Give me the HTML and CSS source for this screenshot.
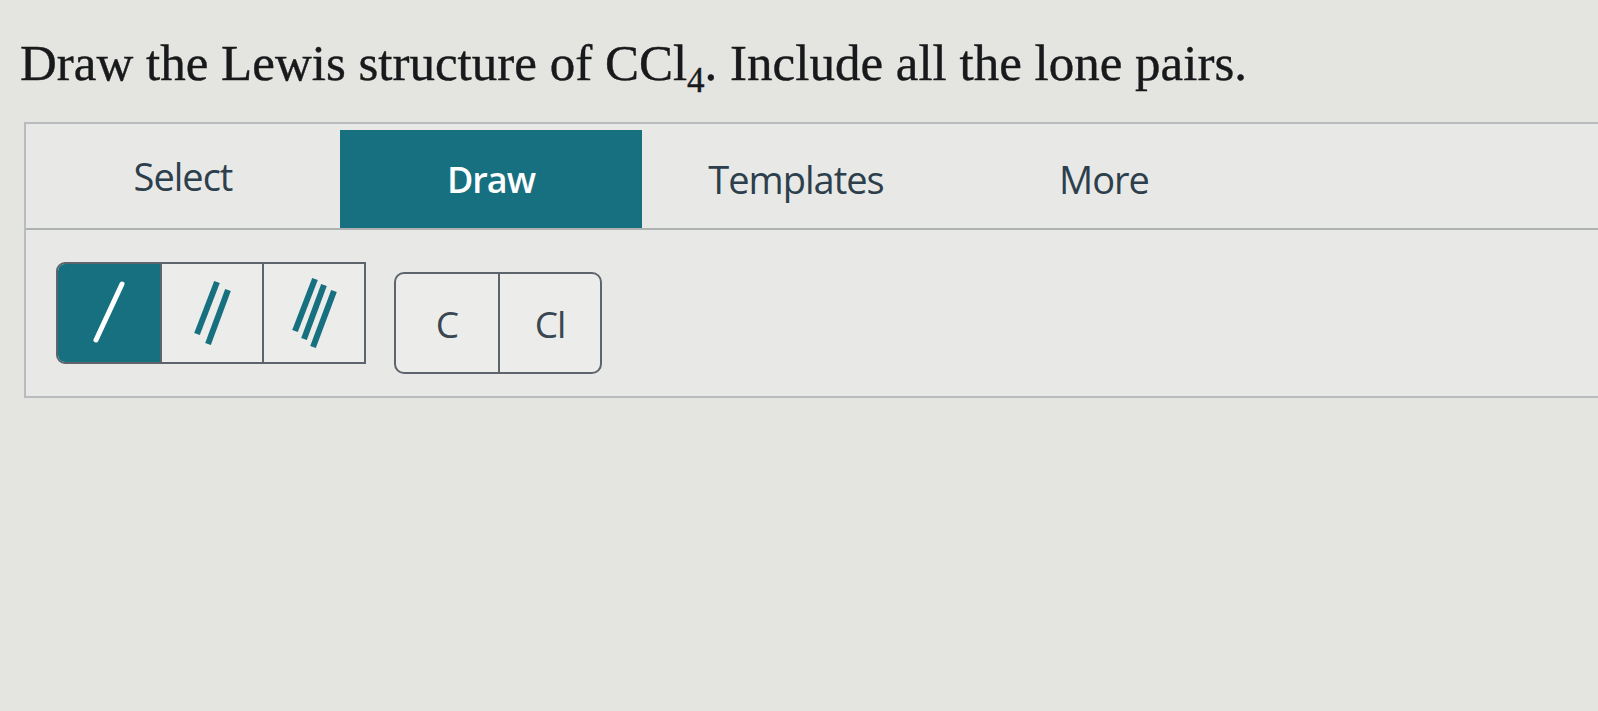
FILE: index.html
```html
<!DOCTYPE html>
<html>
  <head>
    <title>Lewis structure question</title>
    <link rel="stylesheet" href="styles.css">
  </head>
  <body>
    <h1 class="question">Draw the Lewis structure of CCl<sub>4</sub>. Include all the lone pairs.</h1>

    <div class="editor">
      <!-- Mode tabs -->
      <div class="tab-bar">
        <div class="tab">Select</div>
        <div class="tab tab-active">Draw</div>
        <div class="tab">Templates</div>
        <div class="tab">More</div>
      </div>

      <!-- Draw tools -->
      <div class="toolbar">
        <div class="tool-group bond-group">
          <button class="tool tool-active" title="Single bond">
            <svg width="50" height="70" viewBox="0 0 50 70"><line x1="38" y1="6" x2="12" y2="62" stroke="#fff" stroke-width="5" stroke-linecap="round"/></svg>
          </button>
          <button class="tool" title="Double bond">
            <svg width="50" height="70" viewBox="0 0 50 70">
              <line x1="30" y1="4" x2="10" y2="56" stroke="#17707f" stroke-width="6"/>
              <line x1="41" y1="12" x2="21" y2="66" stroke="#17707f" stroke-width="6"/>
            </svg>
          </button>
          <button class="tool" title="Triple bond">
            <svg width="56" height="76" viewBox="0 0 56 76">
              <line x1="29" y1="4" x2="9" y2="56" stroke="#17707f" stroke-width="6"/>
              <line x1="38" y1="10" x2="18" y2="64" stroke="#17707f" stroke-width="6"/>
              <line x1="48" y1="16" x2="27" y2="72" stroke="#17707f" stroke-width="6"/>
            </svg>
          </button>
        </div>
        <div class="tool-group atom-group">
          <button class="tool atom">C</button>
          <button class="tool atom">Cl</button>
        </div>
      </div>
    </div>
  </body>
</html>
```

FILE: styles.css
```css
/* Page */
body {
  margin: 0;
  padding: 0 0 0 20px;
  background-color: #e4e5e1;
  font-family: "Open Sans", "Liberation Sans", sans-serif;
}

/* Question text */
.question {
  margin: 0;
  padding-top: 30px;
  font-family: "Liberation Serif", "Times New Roman", serif;
  font-size: 51px;
  font-weight: normal;
  color: #18191b;
  line-height: 66px;
  -webkit-text-stroke: 0.4px #18191b;
}

.question sub {
  font-size: 35px;
  vertical-align: -12px;
  line-height: 0;
}

/* Editor panel */
.editor {
  margin: 26px 0 0 4px;
  border: 2px solid #b9bcbc;
  border-right: none;
  background-color: #e8e9e6;
  height: 272px;
}

.tab-bar {
  display: flex;
  height: 104px;
  border-bottom: 2px solid #aeb2b3;
}

.tab {
  width: 308px;
  display: flex;
  align-items: center;
  justify-content: center;
  padding-top: 6px;
  font-size: 38px;
  color: #2d3f4c;
  letter-spacing: -1px;
}

.tab:first-child {
  width: 314px;
  padding-top: 0;
}

.tab-active {
  width: 302px;
  background-color: #17707f;
  color: #fff;
  font-size: 36px;
  font-weight: 600;
  margin-top: 6px;
  padding-top: 0;
}

/* Tools */
.toolbar {
  display: flex;
  align-items: flex-start;
  gap: 28px;
  padding: 32px 0 0 30px;
}

.tool-group {
  display: flex;
  border: 2px solid #5d646b;
  background-color: #ecedea;
}

.bond-group {
  border-radius: 9px 0 0 9px;
  overflow: hidden;
}

.atom-group {
  border-radius: 10px;
  margin-top: 10px;
}

.tool {
  width: 102px;
  height: 98px;
  border: none;
  border-left: 2px solid #5d646b;
  background: none;
  padding: 0;
  display: flex;
  align-items: center;
  justify-content: center;
  font-family: "Open Sans", "Liberation Sans", sans-serif;
}

.tool:first-child {
  border-left: none;
}

.tool-active {
  background-color: #17707f;
}

.atom {
  font-size: 37px;
  color: #3a4652;
  letter-spacing: -1px;
}
```
